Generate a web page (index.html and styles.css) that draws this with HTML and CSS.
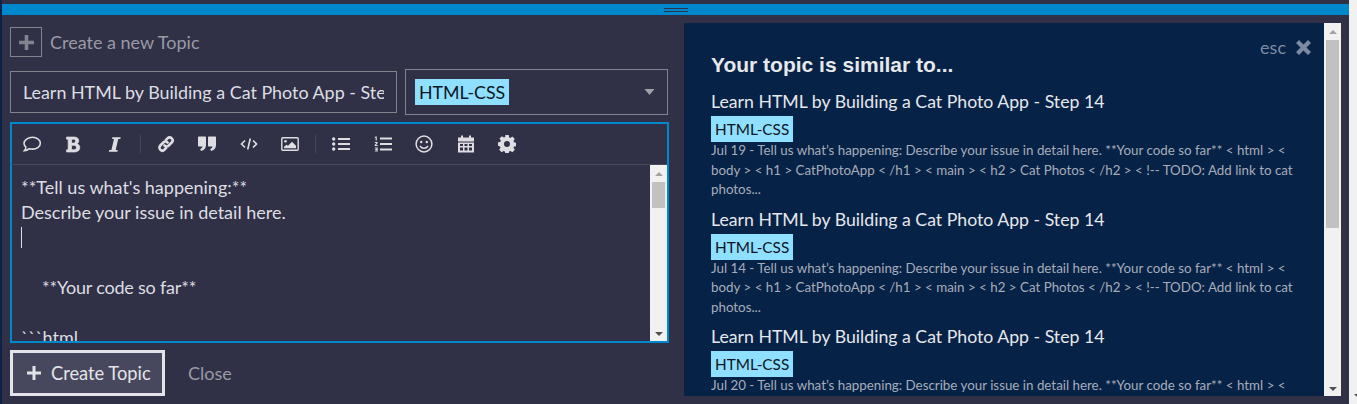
FILE: index.html
```html
<!DOCTYPE html>
<html lang="en">
<head>
<meta charset="utf-8">
<title>Create a new Topic</title>
<link rel="stylesheet" href="styles.css">
</head>
<body>
<div class="page">
  <div class="edge"></div>
  <main class="reply">
    <div class="bar"><div class="grip"></div></div>
    <div class="panes">
      <section class="composer">
        <div class="action">
          <span class="action-icon"><svg viewBox="0 0 16 16" width="17" height="17"><path d="M6.300 1h3.400v5.300H15v3.400H9.700V15H6.300V9.700H1V6.300h5.300z" fill="#83838f"/></svg></span>
          <span class="action-text">Create a new Topic</span>
        </div>
        <div class="fields">
          <div class="title-input"><span class="title-clip">Learn HTML by Building a Cat Photo App - Step 14</span></div>
          <div class="select">
            <span class="tag tag-lg">HTML-CSS</span>
            <svg class="caret" viewBox="0 0 10 6" width="11" height="6"><path d="M0 0h10L5 6z" fill="#a0a0a8"/></svg>
          </div>
        </div>
        <div class="editor">
          <div class="toolbar">
            <button class="tool"><svg viewBox="0 0 18 16" width="20" height="18"><path d="M9.500 2c4 0 7 2.300 7 5.300s-3 5.300-7 5.300c-1 0-2-.15-2.900-.4-1 .8-2.700 1.800-4.400 1.800.8-.8 1.300-1.900 1.300-3.300C2.300 9.700 1.800 8.600 1.800 7.300 1.800 4.300 5.500 2 9.500 2z" fill="none" stroke="#dedee2" stroke-width="1.400"/></svg></button>
            <button class="tool"><svg viewBox="0 0 14 16" width="15" height="17"><path d="M.5 1h7.200c2.600 0 4.200 1.300 4.200 3.500 0 1.300-.7 2.400-1.800 2.900 1.600.4 2.800 1.600 2.800 3.500 0 2.400-1.800 4.100-4.600 4.100H.5v-2h1.500V3H.5zM5.200 3v3.700h2c1.200 0 1.700-.8 1.700-1.900S8.400 3 7.200 3zm0 5.800V13h2.400c1.400 0 2.100-.8 2.100-2.100s-.7-2.100-2.100-2.100z" fill="#dedee2" stroke="#dedee2" stroke-width=".7"/></svg></button>
            <button class="tool"><svg viewBox="0 0 12 16" width="13" height="17"><path d="M4 1.200h7.800l-.3 1.700H9.500L7.100 13.100h1.900l-.3 1.700H.7l.3-1.700h2.100L5.500 2.900H3.700z" fill="#dedee2"/></svg></button>
            <span class="sep"></span>
            <button class="tool"><svg viewBox="0 0 18 18" width="18" height="18"><g fill="none" stroke="#dedee2" stroke-width="2.600" stroke-linecap="round"><path d="M7.500 10.500c1.300 1.300 3 1.200 4.200 0l3-3c1.200-1.200 1.200-3 0-4.200s-3-1.200-4.200 0L9 4.800"/><path d="M10.500 7.500c-1.300-1.300-3-1.200-4.200 0l-3 3c-1.200 1.200-1.200 3 0 4.200s3 1.200 4.200 0L9 13.200"/></g></svg></button>
            <button class="tool"><svg viewBox="0 0 18 16" width="18" height="16"><path d="M1 .5h6c.6 0 1 .4 1 1V9c0 3.200-2 5.500-5 6l-.8-2c1.400-.5 2.200-1.300 2.300-2.500H1c-.6 0-1-.4-1-1v-8c0-.6.400-1 1-1zM11 .5h6c.6 0 1 .4 1 1V9c0 3.200-2 5.500-5 6l-.8-2c1.400-.5 2.200-1.300 2.300-2.500H11c-.6 0-1-.4-1-1v-8c0-.6.400-1 1-1z" fill="#dedee2"/></svg></button>
            <button class="tool"><svg viewBox="0 0 18 14" width="18" height="14"><g fill="none" stroke="#dedee2" stroke-width="1.600"><path d="M5 3.500 1.500 7 5 10.500M13 3.500 16.500 7 13 10.500M10.300 1.500 7.700 12.500"/></g></svg></button>
            <button class="tool"><svg viewBox="0 0 18 14" width="18" height="14"><rect x=".8" y=".8" width="16.400" height="12.400" rx="1" fill="none" stroke="#dedee2" stroke-width="1.400"/><circle cx="4.500" cy="4.300" r="1.300" fill="#dedee2"/><path d="M3 11.200V9.700l2.500-2 1.500 1 4-4 4 4v2.500z" fill="#dedee2"/></svg></button>
            <span class="sep"></span>
            <button class="tool"><svg viewBox="0 0 18 14" width="18" height="14"><g fill="#dedee2"><circle cx="1.700" cy="2" r="1.700"/><circle cx="1.700" cy="7" r="1.700"/><circle cx="1.700" cy="12" r="1.700"/><rect x="6" y="1" width="12" height="2"/><rect x="6" y="6" width="12" height="2"/><rect x="6" y="11" width="12" height="2"/></g></svg></button>
            <button class="tool"><svg viewBox="0 0 18 16" width="18" height="16"><g fill="#dedee2"><path d="M1.600.5h1.200v4H1.600V1.700H.8V1zM.8 6h2.800v1.200L2 9h1.700v1H.7V9l1.700-2H.8zM.8 11.500h2.900v4H.8v-1h1.800v-.6H1.400v-.8h1.200v-.6H.8z"/><rect x="6" y="1.500" width="12" height="2"/><rect x="6" y="7" width="12" height="2"/><rect x="6" y="12.500" width="12" height="2"/></g></svg></button>
            <button class="tool"><svg viewBox="0 0 18 18" width="18" height="18"><circle cx="9" cy="9" r="7.900" fill="none" stroke="#dedee2" stroke-width="1.500"/><circle cx="6.200" cy="7" r="1.200" fill="#dedee2"/><circle cx="11.800" cy="7" r="1.200" fill="#dedee2"/><path d="M5 11c1 1.500 2.400 2.200 4 2.200s3-.7 4-2.200" fill="none" stroke="#dedee2" stroke-width="1.400"/></svg></button>
            <button class="tool"><svg viewBox="0 0 16 18" width="16" height="18"><path fill-rule="evenodd" d="M3 .5h2v2h6v-2h2v2h3v4H0v-4h3zM0 7.500h16v10H0zM2 9v2h3V9zm4.500 0v2h3V9zM11 9v2h3V9zM2 12.500v3h3v-3zm4.500 0v3h3v-3zm4.500 0v3h3v-3z" fill="#dedee2"/></svg></button>
            <button class="tool"><svg viewBox="0 0 18 18" width="18" height="18"><path fill-rule="evenodd" d="M7.300 0h3.400l.4 2.300 1.300.6 2-1.300 2.400 2.400-1.300 2 .5 1.300 2.300.4v3.400l-2.300.4-.5 1.300 1.300 2-2.400 2.400-2-1.300-1.300.5-.4 2.300H7.300l-.4-2.300-1.300-.5-2 1.300-2.400-2.400 1.300-2-.5-1.300L0 10.700V7.300l2.300-.4.500-1.300-1.300-2 2.400-2.400 2 1.300 1.300-.6zM9 6a3 3 0 1 0 0 6 3 3 0 0 0 0-6z" fill="#dedee2"/></svg></button>
          </div>
          <div class="edit-body">
            <div class="edit-text">
              <p>**Tell us what's happening:**</p>
              <p>Describe your issue in detail here.</p>
              <p><span class="cursor"></span></p>
              <p>&nbsp;</p>
              <p class="indent">**Your code so far**</p>
              <p>&nbsp;</p>
              <p>```html</p>
            </div>
            <div class="scroll scroll-editor">
              <span class="arrow-up"></span>
              <span class="thumb thumb-editor"></span>
              <span class="track"></span>
              <span class="arrow-down"></span>
            </div>
          </div>
        </div>
        <div class="actions">
          <button class="primary"><svg viewBox="0 0 16 16" width="16" height="16"><path d="M6.500 1h3v5.500H15v3H9.500V15h-3V9.500H1v-3h5.500z" fill="#e4e4e8"/></svg>Create Topic</button>
          <span class="close-link">Close</span>
        </div>
      </section>
      <aside class="similar">
        <div class="similar-panel">
          <div class="esc"><span>esc</span><svg viewBox="0 0 14 14" width="15" height="15"><path d="M2.800 0 7 4.200 11.200 0 14 2.800 9.800 7l4.200 4.200-2.800 2.800L7 9.800 2.800 14 0 11.200 4.200 7 0 2.800z" fill="#7c8ba2"/></svg></div>
          <h3 class="similar-title">Your topic is similar to...</h3>
          <article class="topic">
            <h4 class="topic-title">Learn HTML by Building a Cat Photo App - Step 14</h4>
            <span class="tag">HTML-CSS</span>
            <p class="blurb">Jul 19 - Tell us what’s happening: Describe your issue in detail here. **Your code so far** &lt; html &gt; &lt; body &gt; &lt; h1 &gt; CatPhotoApp &lt; /h1 &gt; &lt; main &gt; &lt; h2 &gt; Cat Photos &lt; /h2 &gt; &lt; !-- TODO: Add link to cat photos...</p>
          </article>
          <article class="topic">
            <h4 class="topic-title">Learn HTML by Building a Cat Photo App - Step 14</h4>
            <span class="tag">HTML-CSS</span>
            <p class="blurb">Jul 14 - Tell us what’s happening: Describe your issue in detail here. **Your code so far** &lt; html &gt; &lt; body &gt; &lt; h1 &gt; CatPhotoApp &lt; /h1 &gt; &lt; main &gt; &lt; h2 &gt; Cat Photos &lt; /h2 &gt; &lt; !-- TODO: Add link to cat photos...</p>
          </article>
          <article class="topic">
            <h4 class="topic-title">Learn HTML by Building a Cat Photo App - Step 14</h4>
            <span class="tag">HTML-CSS</span>
            <p class="blurb">Jul 20 - Tell us what’s happening: Describe your issue in detail here. **Your code so far** &lt; html &gt; &lt; body &gt; &lt; h1 &gt; CatPhotoApp &lt; /h1 &gt; &lt; main &gt; &lt; h2 &gt; Cat Photos &lt; /h2 &gt; &lt; !-- TODO: Add link to cat photos...</p>
          </article>
        </div>
        <div class="scroll scroll-similar">
          <span class="arrow-up"></span>
          <span class="thumb thumb-similar"></span>
          <span class="track"></span>
          <span class="arrow-down"></span>
        </div>
      </aside>
    </div>
  </main>
  <div class="page-scroll"><span class="track"></span><span class="arrow-down"></span></div>
</div>
</body>
</html>
```

FILE: styles.css
```css
* { box-sizing: border-box; }
html, body { margin: 0; height: 100%; overflow: hidden; }
body { font-family: Lato, "Liberation Sans", sans-serif; color: #dedee2; background: #303147; }
p, h3, h4 { margin: 0; }
.page { display: flex; width: 1357px; height: 404px; }
.edge { width: 2px; background: #0a2346; }
.reply { width: 1347px; padding-top: 4px; display: flex; flex-direction: column; background: #303147; }
.bar { height: 11px; background: #0088cc; display: flex; justify-content: center; align-items: center; }
.grip { width: 24px; height: 4px; border-top: 1px solid #303147; border-bottom: 1px solid #303147; margin-left: 1px; }
.panes { flex: 1; display: flex; min-height: 0; }
.composer { width: 682px; padding: 12px 0 0 8px; flex: none; }
.action { display: flex; align-items: center; gap: 8px; height: 30px; color: #9a9aa5; font-size: 18px; }
.action-icon { width: 32px; height: 30px; border: 1px solid #83838f; display: flex; align-items: center; justify-content: center; }
.fields { display: flex; align-items: center; gap: 8px; margin-top: 12px; width: 658px; }
.title-input { width: 387px; height: 42px; border: 1px solid #83838f; padding: 0 12px; display: flex; align-items: center; font-size: 17.900px; }
.title-clip { display: block; width: 362px; overflow: hidden; white-space: nowrap; }
.select { flex: 1; height: 46px; border: 1px solid #83838f; display: flex; align-items: center; justify-content: space-between; padding: 0 12px 0 9px; }
.tag { display: inline-block; background: #8fdfff; color: #0d1524; font-size: 15.300px; line-height: 26px; padding: 0 4px; }
.tag-lg { font-size: 17.800px; line-height: 26px; padding: 0 4px; }
.editor { width: 659px; height: 221px; margin-top: 7px; border: 2px solid #0088cc; display: flex; flex-direction: column; }
.toolbar { height: 41px; flex: none; border-bottom: 1px solid #47485e; display: flex; align-items: center; margin-left: -1px; }
.tool { width: 41.400px; flex: none; height: 32px; background: none; border: 0; padding: 0; display: flex; align-items: center; justify-content: center; }
.sep { width: 1px; height: 18px; flex: none; background: #47485e; margin: 0 4.500px; }
.edit-body { flex: 1; min-height: 0; display: flex; }
.edit-text { flex: 1; padding: 10px 9px; overflow: hidden; font-size: 18px; line-height: 25px; color: #dedee2; }
.edit-text p { white-space: nowrap; height: 25px; }
.indent { padding-left: 21px; letter-spacing: -.2px; }
.cursor { display: inline-block; width: 1px; height: 21px; background: #dedee2; vertical-align: top; margin-top: 2px; }
.scroll { width: 17px; flex: none; background: #f1f1f1; display: flex; flex-direction: column; align-items: center; }
.arrow-up { width: 0; height: 0; margin: 7px 0 6px; border: 4px solid transparent; border-top: 0; border-bottom: 4px solid #a3a3a3; flex: none; }
.arrow-down { width: 0; height: 0; margin: 6px 0 5px; border: 4px solid transparent; border-bottom: 0; border-top: 4px solid #505050; flex: none; }
.thumb { width: 13px; background: #c1c1c1; flex: none; }
.thumb-editor { height: 26px; }
.thumb-similar { height: 188px; }
.track { flex: 1; }
.actions { display: flex; align-items: center; gap: 23px; margin-top: 7px; }
.primary { width: 155px; height: 46px; border: 3px solid #e4e4e8; background: #47485e; color: #e4e4e8; font: 18.300px Lato, sans-serif; display: flex; align-items: center; gap: 8px; padding: 0 0 0 13px; }
.primary svg { flex: none; margin-right: 1px; }
.close-link { color: #9a9aa5; font-size: 18px; }
.similar { display: flex; margin-top: 8px; height: 373px; flex: none; width: 657px; }
.similar-panel { position: relative; width: 640px; background: #062246; padding: 29px 27px 0; overflow: hidden; }
.esc { position: absolute; top: 13px; right: 13px; display: flex; align-items: center; gap: 10px; color: #7c8ba2; font-size: 18px; }
.similar-title { font: bold 21px/26px "Liberation Sans", Arial, sans-serif; color: #e6e8ec; }
.topic { margin-top: 12px; }
.topic + .topic { margin-top: 8px; }
.topic-title { font-weight: 400; font-size: 17.700px; line-height: 24px; color: #e6e8ec; }
.topic .tag { margin-top: 2px; display: block; width: max-content; }
.blurb { font-size: 13.350px; line-height: 19.500px; color: #a6adba; margin-top: -1px; width: 586px; }
.page-scroll { width: 8px; background: #f1f1f1; display: flex; flex-direction: column; overflow: hidden; }
.page-scroll .arrow-down { margin: 0 0 6px 5px; }
```
